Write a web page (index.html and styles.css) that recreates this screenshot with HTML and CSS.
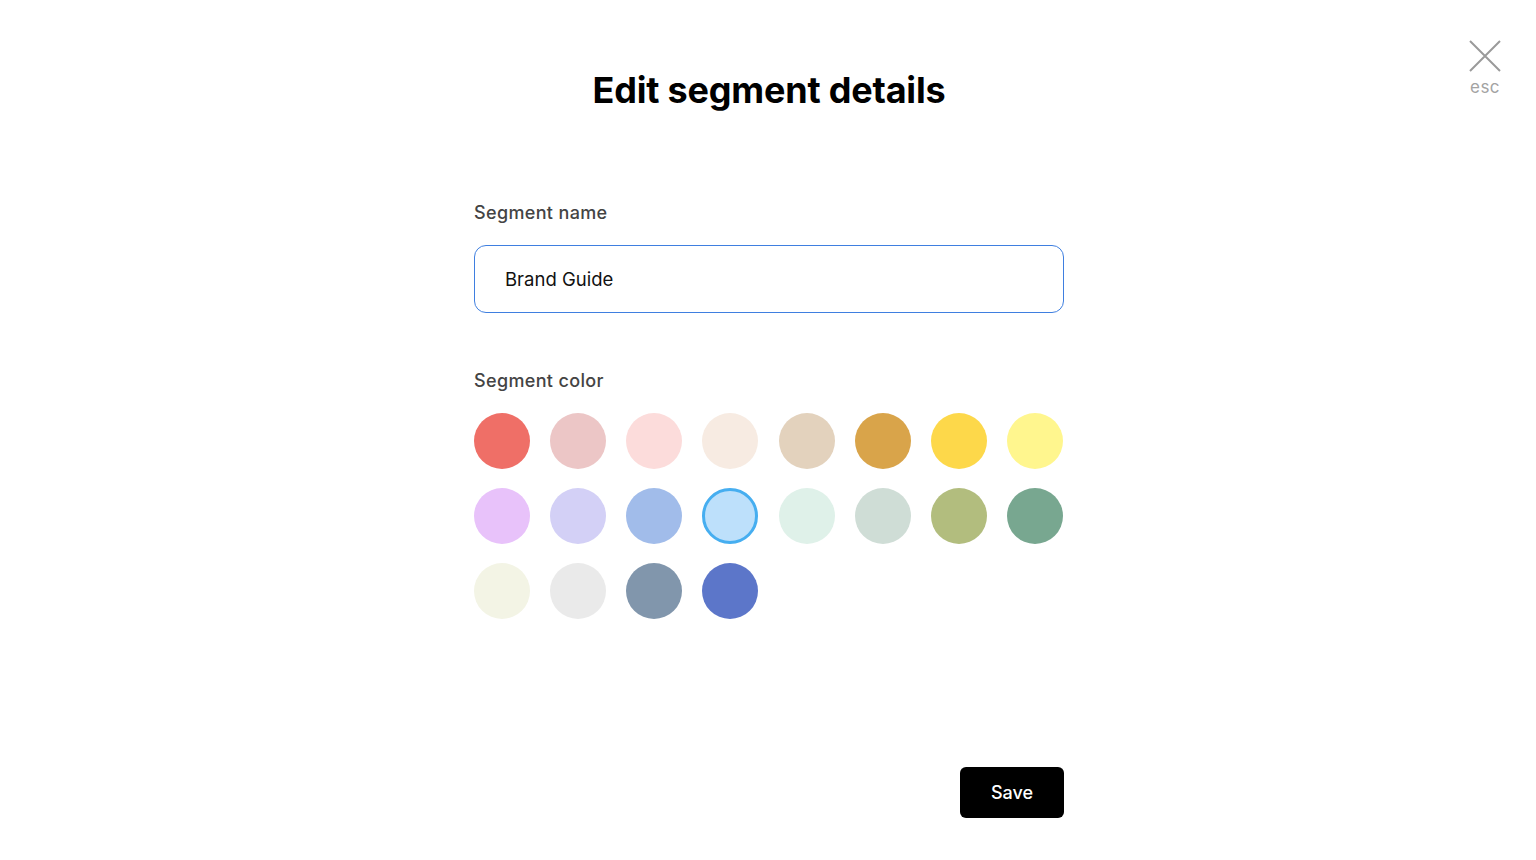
FILE: index.html
```html
<!DOCTYPE html>
<html lang="en">
<head>
<meta charset="utf-8">
<title>Edit segment details</title>
<link rel="stylesheet" href="styles.css">
</head>
<body>
<button class="close" type="button" aria-label="Close">
  <svg width="32" height="32" viewBox="0 0 32 32"><path d="M1 1 L31 31 M31 1 L1 31" stroke="#9a9a9a" stroke-width="2" fill="none"/></svg>
  <span class="esc">esc</span>
</button>
<main class="page">
  <h1 class="title">Edit segment details</h1>
  <label class="label label-name" for="name">Segment name</label>
  <input id="name" class="input" type="text" value="Brand Guide">
  <div class="label label-color">Segment color</div>
  <div class="swatches">
    <span class="sw" style="background:#ef6f67"></span>
    <span class="sw" style="background:#ecc6c6"></span>
    <span class="sw" style="background:#fcdcdb"></span>
    <span class="sw" style="background:#f7ebe2"></span>
    <span class="sw" style="background:#e3d2bd"></span>
    <span class="sw" style="background:#d9a44a"></span>
    <span class="sw" style="background:#fdd84a"></span>
    <span class="sw" style="background:#fff68e"></span>
    <span class="sw" style="background:#e8c2fa"></span>
    <span class="sw" style="background:#d3d0f6"></span>
    <span class="sw" style="background:#a1bcea"></span>
    <span class="sw selected" style="background:#bde0fb"></span>
    <span class="sw" style="background:#dff1e9"></span>
    <span class="sw" style="background:#cfddd6"></span>
    <span class="sw" style="background:#b2bd7e"></span>
    <span class="sw" style="background:#78a790"></span>
    <span class="sw" style="background:#f3f4e5"></span>
    <span class="sw" style="background:#eaeaea"></span>
    <span class="sw" style="background:#8196ac"></span>
    <span class="sw" style="background:#5c76c9"></span>
  </div>
  <div class="actions">
    <button class="save" type="button">Save</button>
  </div>
</main>
</body>
</html>
```
FILE: styles.css
```css
* { box-sizing: border-box; }
html, body { margin: 0; padding: 0; background: #fff; }
body {
  font-family: Inter, "Noto Sans", "Liberation Sans", sans-serif;
  color: #111;
  height: 860px;
  overflow: hidden;
  position: relative;
}
.close {
  position: absolute;
  top: 40px;
  right: 35px;
  background: none;
  border: 0;
  padding: 0;
  display: flex;
  flex-direction: column;
  align-items: center;
  cursor: pointer;
  font-family: inherit;
}
.close svg { display: block; }
.esc {
  margin-top: 5px;
  font-size: 17px;
  line-height: 20px;
  letter-spacing: 0.4px;
  color: #a3a3a3;
}
.page {
  width: 592px;
  margin: 0 auto;
  padding-top: 68px;
  padding-left: 2px;
  display: flex;
  flex-direction: column;
}
.title {
  margin: 0;
  text-align: center;
  font-size: 36px;
  line-height: 44px;
  font-weight: 700;
  letter-spacing: -0.2px;
  color: #000;
}
.label {
  font-size: 18px;
  line-height: 22px;
  font-weight: 500;
  letter-spacing: 0.35px;
  color: #444;
}
.label-name { margin-top: 90px; }
.input {
  margin-top: 21px;
  width: 590px;
  height: 68px;
  border: 1.5px solid #3f7fe0;
  border-radius: 12px;
  padding: 0 30px;
  font-family: inherit;
  font-size: 18.5px;
  color: #111;
  outline: none;
}
.label-color { margin-top: 57px; }
.swatches {
  margin-top: 21px;
  width: 589px;
  display: grid;
  grid-template-columns: repeat(8, 56px);
  justify-content: space-between;
  row-gap: 19px;
}
.sw {
  width: 56px;
  height: 56px;
  border-radius: 50%;
  display: block;
}
.sw.selected { border: 3px solid #46aef0; }
.actions {
  margin-top: 148px;
  display: flex;
  justify-content: flex-end;
}
.save {
  width: 104px;
  height: 51px;
  border: 0;
  border-radius: 6px;
  background: #000;
  color: #fff;
  font-family: inherit;
  font-size: 18px;
  font-weight: 500;
  cursor: pointer;
}
```
